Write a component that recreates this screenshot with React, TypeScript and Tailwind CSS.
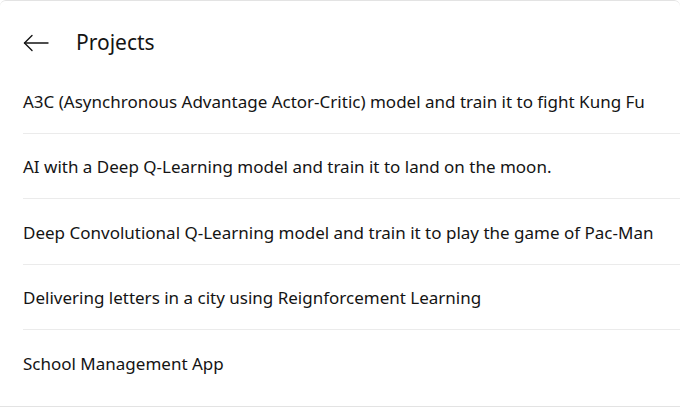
const projects = [
  "A3C (Asynchronous Advantage Actor-Critic) model and train it to fight Kung Fu",
  "AI with a Deep Q-Learning model and train it to land on the moon.",
  "Deep Convolutional Q-Learning model and train it to play the game of Pac-Man",
  "Delivering letters in a city using Reignforcement Learning",
  "School Management App",
];

function BackArrow() {
  return (
    <svg width="26" height="18" viewBox="0 0 26 18" fill="none" stroke="currentColor" strokeWidth="1.4" strokeLinecap="round" strokeLinejoin="round">
      <path d="M25 9H1.5" />
      <path d="M9 1.5L1.5 9L9 16.5" />
    </svg>
  );
}

export default function App() {
  return (
    <div className="h-[408px] w-[680px] overflow-hidden bg-white font-['Noto_Sans',sans-serif] text-[#141414]">
      <div className="h-[407px] rounded-t-md border-t border-b border-[#e3e3e3]">
        <div className="flex h-[67px] items-center pl-[23px] pt-[16px]">
          <BackArrow />
          <h1 className="ml-[27px] text-[21px] leading-none">Projects</h1>
        </div>
        <ul>
          {projects.map((p, i) => (
            <li
              key={p}
              className={`ml-[23px] flex h-[65.5px] items-center pt-[2px] text-[17px] ${
                i < projects.length - 1 ? "border-b border-[#ebebeb]" : ""
              }`}
            >
              {p}
            </li>
          ))}
        </ul>
      </div>
    </div>
  );
}
